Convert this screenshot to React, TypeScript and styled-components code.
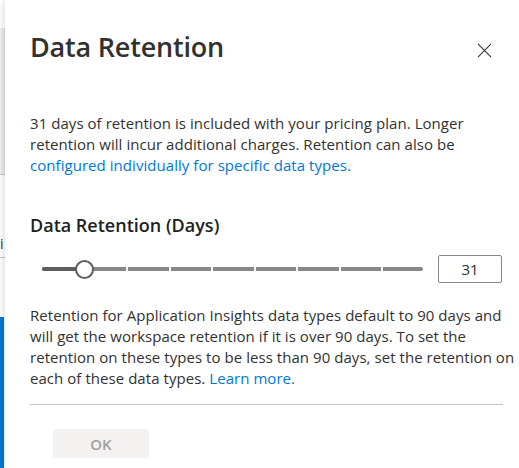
import React from "react";
import styled, { createGlobalStyle } from "styled-components";

const GlobalStyle = createGlobalStyle`
  html, body { margin: 0; padding: 0; background: #ffffff; }
  body { font-family: "Open Sans", "Noto Sans", sans-serif; -webkit-font-smoothing: antialiased; }
  * { box-sizing: border-box; }
`;

const Page = styled.div`
  position: relative;
  display: flex;
  width: 519px;
  height: 468px;
  overflow: hidden;
  background: #ffffff;
`;

const RedMark = styled.span`
  position: absolute;
  left: 129px;
  top: 0;
  width: 2px;
  height: 3px;
  background: #e81123;
`;

const BackStrip = styled.div`
  width: 5px;
  flex: none;
  display: flex;
  flex-direction: column;
  overflow: hidden;
`;

const StripBlank = styled.div<{ $h: number; $line?: boolean }>`
  height: ${(p) => p.$h}px;
  flex: none;
  background: #ffffff;
  border-bottom: ${(p) => (p.$line ? "1px solid #c8c6c4" : "none")};
  overflow: hidden;
  position: relative;
`;

const StripShade = styled.div`
  height: 147px;
  flex: none;
  background: linear-gradient(to right, #f3f2f1, #e6e4e2);
  border-bottom: 1px solid #c8c6c4;
`;

const StripGlyph = styled.div<{ $size: number; $shift: number; $top: number }>`
  position: absolute;
  left: ${(p) => p.$shift}px;
  top: ${(p) => p.$top}px;
  font-size: ${(p) => p.$size}px;
  line-height: 1;
  color: #323130;
  white-space: nowrap;
`;

const StripBlue = styled.div`
  flex: 1;
  width: 4px;
  background: #0078d4;
`;

const Panel = styled.div`
  flex: 1;
  background: #ffffff;
  box-shadow: -2px 0 6px rgba(0, 0, 0, 0.12);
  padding: 0 16px 0 25px;
  display: flex;
  flex-direction: column;
  color: #323130;
  position: relative;
`;

const Header = styled.div`
  display: flex;
  justify-content: space-between;
  align-items: flex-start;
  padding-top: 29px;
  height: 113px;
`;

const Title = styled.h1`
  margin: 0;
  font-size: 27px;
  line-height: 36px;
  font-weight: 600;
  color: #323130;
  letter-spacing: -0.2px;
`;

const CloseButton = styled.button`
  width: 32px;
  height: 32px;
  margin-top: 5px;
  margin-right: 3px;
  border: none;
  background: transparent;
  display: flex;
  align-items: center;
  justify-content: center;
  padding: 0;
  cursor: pointer;
  color: #323130;
`;

const Paragraph = styled.p`
  margin: 0 -14px 0 0;
  font-size: 15px;
  line-height: 21px;
  color: #323130;
  letter-spacing: 0.05px;
`;

const Link = styled.a`
  color: #0078d4;
  text-decoration: none;
`;

const SectionLabel = styled.div`
  margin-top: 37px;
  font-size: 18px;
  line-height: 24px;
  font-weight: 600;
  color: #201f1e;
`;

const SliderRow = styled.div`
  display: flex;
  align-items: center;
  height: 28px;
  margin-top: 18px;
  margin-bottom: 22px;
`;

const SliderArea = styled.div`
  position: relative;
  flex: none;
  width: 381px;
  height: 20px;
  margin-left: 12px;
`;

const Track = styled.div`
  position: absolute;
  left: 0;
  right: 0;
  top: 8px;
  height: 4px;
  border-radius: 2px;
  background: #8a8886;
  overflow: hidden;
`;

const TrackFill = styled.div`
  position: absolute;
  left: 0;
  top: 0;
  bottom: 0;
  background: #605e5c;
`;

const Tick = styled.div`
  position: absolute;
  top: 0;
  bottom: 0;
  width: 2px;
  background: #ffffff;
`;

const Thumb = styled.div`
  position: absolute;
  top: 0.5px;
  width: 19px;
  height: 19px;
  margin-left: -9.5px;
  border-radius: 50%;
  background: #ffffff;
  border: 2px solid #605e5c;
`;

const ValueBox = styled.div`
  margin-left: auto;
  margin-right: 1px;
  width: 64px;
  height: 28px;
  border: 1px solid #8a8886;
  border-radius: 2px;
  display: flex;
  align-items: center;
  justify-content: center;
  font-size: 15px;
  color: #323130;
`;

const Divider = styled.hr`
  margin: 15px 0 0 0;
  border: none;
  border-top: 1px solid #c8c6c4;
  height: 0;
`;

const Footer = styled.div`
  display: flex;
  padding-top: 24px;
  padding-left: 23px;
`;

const OkButton = styled.button`
  width: 96px;
  height: 29px;
  border: none;
  border-radius: 2px;
  background: #f3f2f1;
  color: #a19f9d;
  font-family: inherit;
  font-size: 15px;
  font-weight: 600;
  padding: 0;
`;

const thumbPos = 42.5;
const ticks = [1, 2, 3, 4, 5, 6, 7, 8].map((k) => thumbPos + k * 42.5 - 1);

export default function App() {
  return (
    <>
      <GlobalStyle />
      <Page>
        <RedMark />
        <BackStrip>
          <StripBlank $h={28} />
          <StripShade />
          <StripBlank $h={83} $line>
            <StripGlyph $size={26} $shift={-12} $top={16}>
              c
            </StripGlyph>
            <StripGlyph $size={14} $shift={0} $top={62}>
              i
            </StripGlyph>
          </StripBlank>
          <StripBlank $h={59} />
          <StripBlue />
        </BackStrip>
        <Panel>
          <Header>
            <Title>Data Retention</Title>
            <CloseButton aria-label="Close">
              <svg width="15" height="15" viewBox="0 0 16 16">
                <path d="M1 1 L15 15 M15 1 L1 15" stroke="#323130" strokeWidth="1.1" fill="none" />
              </svg>
            </CloseButton>
          </Header>
          <Paragraph>
            31 days of retention is included with your pricing plan. Longer
            <br />
            retention will incur additional charges. Retention can also be
            <br />
            <Link href="#">configured individually for specific data types.</Link>
          </Paragraph>
          <SectionLabel>Data Retention (Days)</SectionLabel>
          <SliderRow>
            <SliderArea>
              <Track>
                <TrackFill style={{ width: `${thumbPos}px` }} />
                {ticks.map((t) => (
                  <Tick key={t} style={{ left: `${t}px` }} />
                ))}
              </Track>
              <Thumb style={{ left: `${thumbPos}px` }} />
            </SliderArea>
            <ValueBox>31</ValueBox>
          </SliderRow>
          <Paragraph>
            Retention for Application Insights data types default to 90 days and
            <br />
            will get the workspace retention if it is over 90 days. To set the
            <br />
            retention on these types to be less than 90 days, set the retention on
            <br />
            each of these data types. <Link href="#">Learn more.</Link>
          </Paragraph>
          <Divider />
          <Footer>
            <OkButton disabled>OK</OkButton>
          </Footer>
        </Panel>
      </Page>
    </>
  );
}
